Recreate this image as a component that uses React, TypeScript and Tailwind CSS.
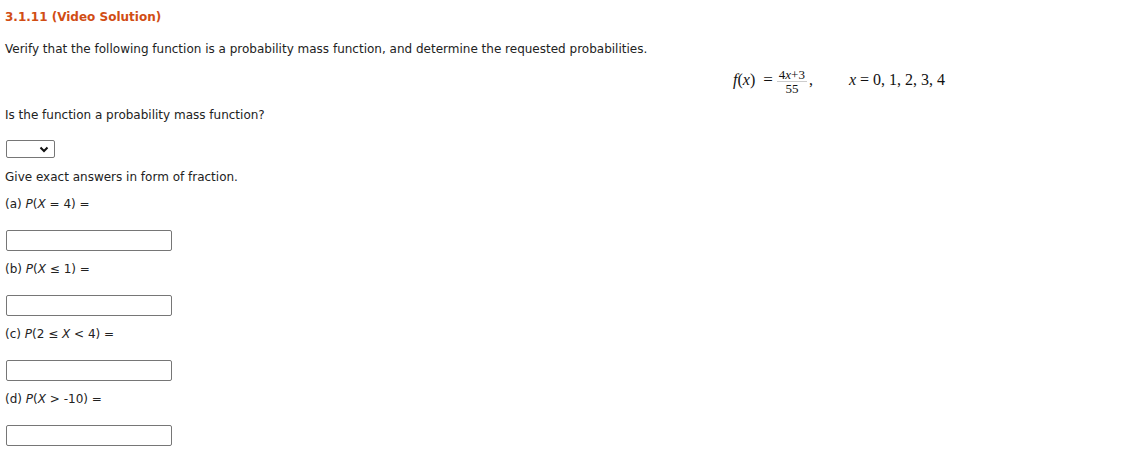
import React from "react";

const font = { fontFamily: "'DejaVu Sans', Verdana, sans-serif" };

function Box() {
  return <div className="w-[166px] h-[21px] border border-[#767676] bg-white rounded-[2px]" />;
}

function Label({ pre, children }: { pre: string; children: React.ReactNode }) {
  return (
    <div className="text-[12px] leading-[16px] text-[#222]">
      {pre} {children}
    </div>
  );
}

export default function App() {
  return (
    <div className="w-[1132px] h-[469px] bg-white text-[#222] pl-[5px] pt-[9px]" style={font}>
      <div className="text-[12px] font-bold text-[#d14d14] leading-[16px]">3.1.11 (Video Solution)</div>
      <div className="mt-[16px] text-[12px] leading-[16px]">
        Verify that the following function is a probability mass function, and determine the requested probabilities.
      </div>
      <div className="mt-[8px] h-[30px] flex items-center pl-[728px] font-['Liberation_Serif',serif] text-[16px] text-[#111]">
        <span><i>f</i>(<i>x</i>)</span>
        <span className="ml-[8px] text-[17px]">=</span>
        <span className="ml-[4px] inline-flex flex-col items-center text-[13px] leading-[11px] relative top-[1px]">
          <span className="px-[2px]">4<i>x</i>+3</span>
          <span className="w-full h-[1px] bg-[#ccc] my-[1px]" />
          <span>55</span>
        </span>
        <span className="ml-[2px]">,</span>
        <span className="ml-[36px] text-[16px]"><i>x</i> = 0, 1, 2, 3, 4</span>
      </div>
      <div className="mt-[12px] text-[12px] leading-[16px]">Is the function a probability mass function?</div>
      <div className="mt-[17px] w-[49px] h-[18px] border border-[#767676] rounded-[2px] flex items-center justify-end pr-[5px] ml-[1px]">
        <svg width="10" height="7" viewBox="0 0 10 7">
          <path d="M1.5 1.5 L5 5 L8.5 1.5" fill="none" stroke="#111" strokeWidth="2" />
        </svg>
      </div>
      <div className="mt-[11px] text-[12px] leading-[16px]">Give exact answers in form of fraction.</div>
      <div className="mt-[11px]">
        <Label pre="(a)"><i>P</i>(<i>X</i> = 4) =</Label>
      </div>
      <div className="mt-[18px] ml-[1px]"><Box /></div>
      <div className="mt-[10px]">
        <Label pre="(b)"><i>P</i>(<i>X</i> ≤ 1) =</Label>
      </div>
      <div className="mt-[18px] ml-[1px]"><Box /></div>
      <div className="mt-[10px]">
        <Label pre="(c)"><i>P</i>(2 ≤ <i>X</i> &lt; 4) =</Label>
      </div>
      <div className="mt-[18px] ml-[1px]"><Box /></div>
      <div className="mt-[10px]">
        <Label pre="(d)"><i>P</i>(<i>X</i> &gt; -10) =</Label>
      </div>
      <div className="mt-[18px] ml-[1px]"><Box /></div>
    </div>
  );
}
